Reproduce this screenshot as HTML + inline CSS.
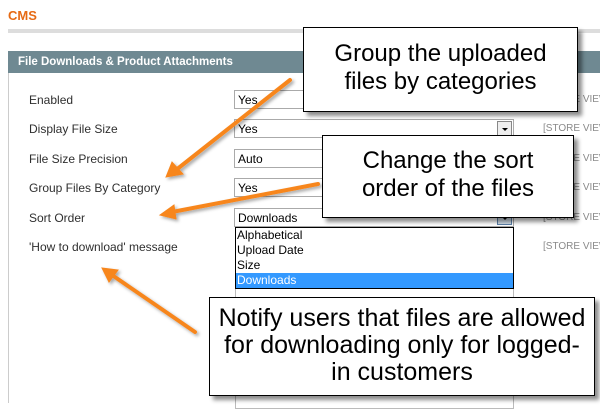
<!DOCTYPE html>
<html><head><meta charset="utf-8"><style>
*{margin:0;padding:0;box-sizing:border-box}
body{width:600px;height:400px;overflow:hidden;background:#fff;font-family:"Liberation Sans",Arial,sans-serif;position:relative}
.a{position:absolute}
.lbl{position:absolute;left:29px;font-size:12px;color:#2f2f2f}
.sel{position:absolute;left:234px;width:280px;height:19px;border:1px solid #aaa;background:#fff;font-size:12px;padding:2px 0 0 3px;color:#000}
.btn{position:absolute;right:1px;top:1px;width:15px;height:15px;border:1px solid #888;background:#eee}
.btn:after{content:"";position:absolute;left:4px;top:6px;border-left:3px solid transparent;border-right:3px solid transparent;border-top:3px solid #000}
.sv{position:absolute;left:543px;font-size:10px;color:#8a8a8a;white-space:nowrap}
.box{position:absolute;background:#fff;border:1px solid #000;box-shadow:4px 4px 4px rgba(0,0,0,.45);text-align:center;font-size:24px;line-height:28px;color:#000;white-space:nowrap}
</style></head><body>
<div class="a" style="left:8px;top:8px;font-size:13px;font-weight:bold;color:#e66a14">CMS</div>
<div class="a" style="left:8px;top:29px;width:592px;height:4px;background:#ddd"></div>
<div class="a" style="left:8px;top:51px;width:592px;height:22px;background:#6f8992;color:#fff;font-size:11.5px;font-weight:bold;padding:5px 0 0 10px">File Downloads &amp; Product Attachments</div>
<div class="a" style="left:8px;top:73px;width:592px;height:330px;border-left:1px solid #ccc"></div>
<div class="lbl" style="top:93px">Enabled</div>
<div class="lbl" style="top:122px">Display File Size</div>
<div class="lbl" style="top:152px">File Size Precision</div>
<div class="lbl" style="top:181px">Group Files By Category</div>
<div class="lbl" style="top:211px">Sort Order</div>
<div class="lbl" style="top:240px">'How to download' message</div>
<div class="sel" style="top:90px">Yes</div>
<div class="sel" style="top:119px">Yes<div class="btn"></div></div>
<div class="sel" style="top:149px">Auto</div>
<div class="sel" style="top:178px">Yes</div>
<div class="sel" style="top:208px">Downloads<div class="btn" style="background:#cfdbe6;border-color:#5b7fa6"></div></div>
<div class="a" style="left:235px;top:227px;width:279px;height:62px;border:1px solid #000;background:#fff;font-size:12px;line-height:15px">
<div style="padding-left:1px">Alphabetical</div><div style="padding-left:1px">Upload Date</div><div style="padding-left:1px">Size</div><div style="padding-left:1px;background:#3399ff;color:#fff">Downloads</div></div>
<div class="a" style="left:235px;top:289px;width:279px;height:120px;border:1px solid #bbb;border-top:none"></div>
<div class="sv" style="top:94px">[STORE VIEW]</div>
<div class="sv" style="top:123px">[STORE VIEW]</div>
<div class="sv" style="top:153px">[STORE VIEW]</div>
<div class="sv" style="top:182px">[STORE VIEW]</div>
<div class="sv" style="top:212px">[STORE VIEW]</div>
<div class="sv" style="top:241px">[STORE VIEW]</div>
<svg class="a" style="left:0;top:0" width="600" height="400">
<defs><filter id="s"><feDropShadow dx="2" dy="2" stdDeviation="1.5" flood-opacity=".35"/></filter></defs>
<g stroke="#f7861e" stroke-width="4" stroke-linecap="round" fill="#f7861e" filter="url(#s)">
<line x1="290" y1="80" x2="176" y2="170"/><polygon points="166,177 172,162 183,174" stroke-width="1"/>
<line x1="318" y1="184" x2="172" y2="212"/><polygon points="160,215 174,205 176,219" stroke-width="1"/>
<line x1="195" y1="332" x2="112" y2="275"/><polygon points="102,268 118,270 109,282" stroke-width="1"/>
</g></svg>
<div class="box" style="left:303px;top:27px;width:275px;height:85px;padding-top:12px">Group the uploaded<br>files by categories</div>
<div class="box" style="left:322px;top:135px;width:252px;height:83px;padding-top:11px">Change the sort<br>order of the files</div>
<div class="box" style="left:209px;top:297px;width:386px;height:99px;padding-top:7px;font-size:25px;line-height:27px">Notify users that files are allowed<br>for downloading only for logged-<br>in customers</div>
</body></html>
